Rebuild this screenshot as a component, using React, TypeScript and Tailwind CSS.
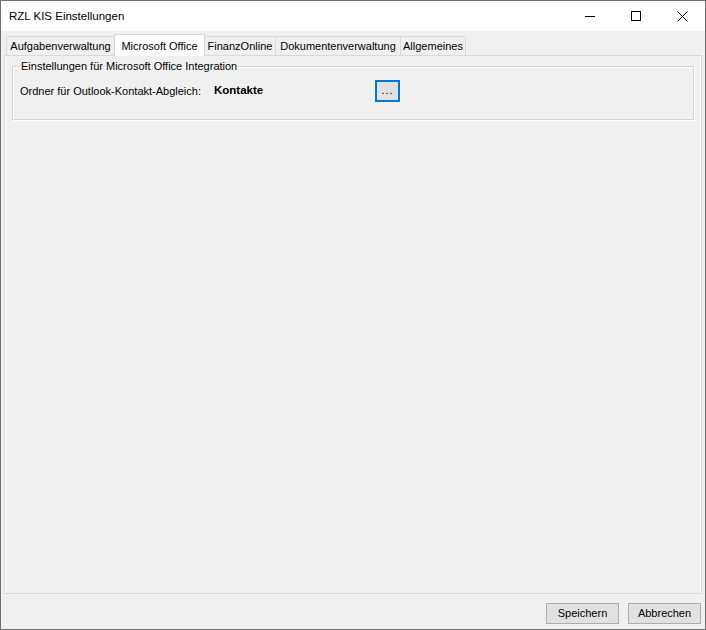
import React from "react";

const tabs = [
  { label: "Aufgabenverwaltung", w: "w-[109px]" },
  { label: "Microsoft Office", w: "w-[91px]", active: true },
  { label: "FinanzOnline", w: "w-[72px]" },
  { label: "Dokumentenverwaltung", w: "w-[126px]" },
  { label: "Allgemeines", w: "w-[66px]" },
];

export default function App() {
  return (
    <div
      className="w-[706px] h-[630px] border border-[#707070] flex flex-col bg-[#f0f0f0] text-[11px] text-black overflow-hidden whitespace-nowrap"
      style={{ fontFamily: '"Liberation Sans", Arial, sans-serif' }}
    >
      {/* title bar */}
      <div className="h-[30px] bg-white flex items-center justify-between shrink-0">
        <span className="pl-[8px] text-[11.5px] pt-[1px]">RZL KIS Einstellungen</span>
        <div className="flex h-full">
          <div className="w-[46px] h-full flex items-center justify-center">
            <svg width="10" height="10" viewBox="0 0 10 10">
              <line x1="0" y1="5.5" x2="10" y2="5.5" stroke="#000" strokeWidth="1" />
            </svg>
          </div>
          <div className="w-[46px] h-full flex items-center justify-center">
            <svg width="10" height="10" viewBox="0 0 10 10">
              <rect x="0.5" y="0.5" width="9" height="9" fill="none" stroke="#000" strokeWidth="1" />
            </svg>
          </div>
          <div className="w-[46px] h-full flex items-center justify-center">
            <svg width="11" height="11" viewBox="0 0 11 11">
              <path d="M0.5 0.5 L10.5 10.5 M10.5 0.5 L0.5 10.5" stroke="#000" strokeWidth="1" />
            </svg>
          </div>
        </div>
      </div>

      {/* body */}
      <div className="flex-1 flex flex-col px-[3px] pt-[2px] pb-[5px]">
        {/* tab strip */}
        <div className="flex items-end h-[22px] pl-[2px] relative z-10">
          {tabs.map((t, i) =>
            t.active ? (
              <div
                key={t.label}
                className={`${t.w} h-[22px] -ml-[1px] bg-white border border-b-0 border-[#d9d9d9] flex items-start justify-center pt-[3px] relative top-[1px]`}
              >
                {t.label}
              </div>
            ) : (
              <div
                key={t.label}
                className={`${t.w} h-[19px] bg-[#f0f0f0] border border-b-0 border-[#d9d9d9] flex items-center justify-center ${i === 0 ? "" : "-ml-[1px]"}`}
              >
                {t.label}
              </div>
            )
          )}
        </div>

        {/* panel */}
        <div className="flex-1 border border-[#d9d9d9] bg-white">
          <div className="h-full ml-[1px] mb-[2px] mr-[1px] bg-[#f0f0f0] px-[6px] pt-[3px]">
            <fieldset className="border border-[#d5d5d5] h-[61px] px-[7px] m-0 shadow-[inset_1px_1px_0_#fff,1px_1px_0_#fff]">
              <legend className="px-[1px] leading-[14px]">
                Einstellungen für Microsoft Office Integration
              </legend>
              <div className="flex items-center mt-[7px]">
                <span className="w-[194px]">Ordner für Outlook-Kontakt-Abgleich:</span>
                <span className="w-[161px] font-bold text-[11.5px]">Kontakte</span>
                <button className="w-[25px] h-[22px] border-2 border-[#0078d7] bg-[#e1e1e1] flex items-center justify-center leading-none pb-[2px] tracking-[1px]">
                  ...
                </button>
              </div>
            </fieldset>
          </div>
        </div>

        {/* footer */}
        <div className="flex justify-end gap-[9px] mt-[9px] pr-[1px]">
          <button className="w-[73px] h-[21px] border border-[#adadad] bg-[#e1e1e1] leading-none">
            Speichern
          </button>
          <button className="w-[73px] h-[21px] border border-[#adadad] bg-[#e1e1e1] leading-none">
            Abbrechen
          </button>
        </div>
      </div>
    </div>
  );
}
